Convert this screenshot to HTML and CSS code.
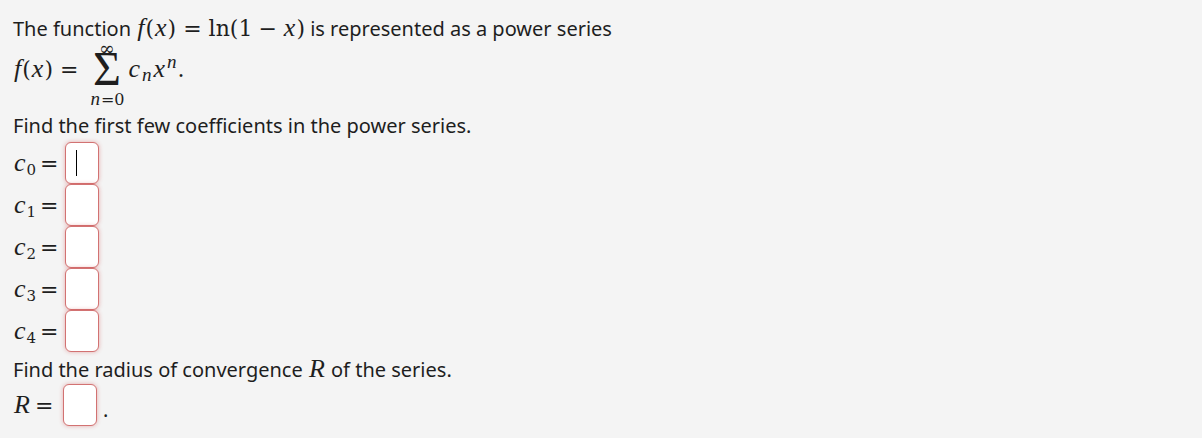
FILE: index.html
```html
<!DOCTYPE html>
<html lang="en">
<head>
<meta charset="utf-8">
<title>Power series</title>
<link rel="stylesheet" href="styles.css">
</head>
<body>
<div class="page">
  <p class="line">The function <span class="m"><i>f</i>(<i>x</i>)<span class="rel">=</span>ln(1<span class="bin">−</span><i>x</i>)</span> is represented as a power series</p>
  <div class="series m">
    <span class="lhs"><i>f</i>(<i>x</i>)<span class="rel">=</span></span>
    <span class="sum">
      <span class="lim-top">∞</span>
      <span class="sigma">Σ</span>
      <span class="lim-bot"><i>n</i>=0</span>
    </span>
    <span class="term"><i>c</i><sub><i>n</i></sub><i>x</i><sup><i>n</i></sup>.</span>
  </div>
  <p class="line">Find the first few coefficients in the power series.</p>
  <div class="rows">
    <div class="row"><span class="lbl m"><i>c</i><sub>0</sub><span class="rel">=</span></span><span class="box"><span class="caret"></span></span></div>
    <div class="row"><span class="lbl m"><i>c</i><sub>1</sub><span class="rel">=</span></span><span class="box"></span></div>
    <div class="row"><span class="lbl m"><i>c</i><sub>2</sub><span class="rel">=</span></span><span class="box"></span></div>
    <div class="row"><span class="lbl m"><i>c</i><sub>3</sub><span class="rel">=</span></span><span class="box"></span></div>
    <div class="row"><span class="lbl m"><i>c</i><sub>4</sub><span class="rel">=</span></span><span class="box"></span></div>
  </div>
  <p class="line line-r">Find the radius of convergence <span class="m"><i>R</i></span> of the series.</p>
  <div class="row row-r"><span class="lbl lbl-r m"><i>R</i><span class="rel">=</span></span><span class="box"></span><span class="dot">.</span></div>
</div>
</body>
</html>
```
FILE: styles.css
```css
html, body {
  margin: 0;
  padding: 0;
  background: #f4f4f4;
}
.page {
  padding: 14px 13px;
  font-family: "Noto Sans", "Open Sans", sans-serif;
  font-size: 20px;
  color: #1e1e1e;
}
.line {
  margin: 0;
  height: 28px;
  line-height: 28px;
  white-space: nowrap;
}
.m {
  font-family: "DejaVu Serif", "Liberation Serif", serif;
  font-size: 22px;
  font-weight: normal;
}
.m i {
  font-family: "Liberation Serif", serif;
  font-style: italic;
  font-size: 26px;
  padding: 0 1px;
}
.rel { margin: 0 7px; }
.bin { margin: 0 6px; }
.series {
  display: flex;
  align-items: flex-start;
  height: 70px;
}
.lhs { line-height: 28px; margin-top: 13px; }
.sum {
  display: flex;
  flex-direction: column;
  align-items: center;
  margin: 2px 3px 0 4px;
}
.lim-top { font-size: 19px; height: 8px; line-height: 8px; }
.sigma {
  font-family: "Liberation Serif", serif;
  font-size: 48px;
  line-height: 34px;
  height: 34px;
}
.lim-bot { font-size: 16px; line-height: 16px; height: 16px; margin-top: 5px; }
.lim-bot i { font-size: 19px; }
.term { line-height: 28px; margin-top: 13px; }
.term sub, .term sup, .lbl sub { font-size: 16px; line-height: 0; }
.term sub i, .term sup i { font-size: 19px; }
.term sub { vertical-align: -4px; }
.term sup { vertical-align: 9px; }
.rows {
  margin-top: 2px;
  display: flex;
  flex-direction: column;
}
.row {
  display: flex;
  align-items: center;
  height: 42px;
}
.lbl {
  display: block;
  width: 52px;
  flex: none;
  line-height: 42px;
  box-sizing: border-box;
  white-space: nowrap;
}
.lbl sub { vertical-align: -4px; font-size: 15px; }
.lbl .rel { margin: 0 0 0 4px; }
.box {
  width: 34px;
  height: 42px;
  flex: none;
  box-sizing: border-box;
  border: 1px solid #d27272;
  border-radius: 6px;
  background: #fff;
  box-shadow: 0 0 4px rgba(210, 80, 80, 0.45);
  display: flex;
  align-items: center;
}
.caret {
  display: block;
  width: 1px;
  height: 26px;
  background: #000;
  margin-left: 10px;
}
.line-r { margin-top: 3px; }
.row-r { margin-top: 1px; }
.lbl-r { width: 50px; }
.lbl-r .rel { margin-left: 4px; }
.dot { margin-left: 6px; margin-top: 8px; }
```
